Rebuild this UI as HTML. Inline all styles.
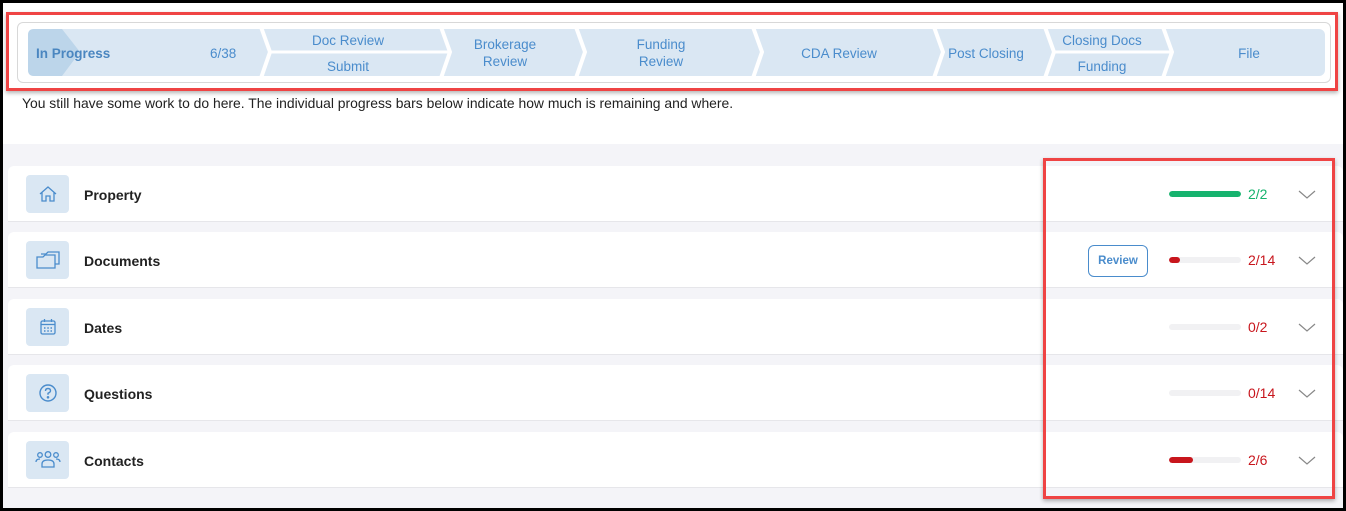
<!DOCTYPE html>
<html><head><style>
*{margin:0;padding:0;box-sizing:border-box}
body{width:1346px;height:511px;background:#000;position:relative;overflow:hidden;font-family:"Liberation Sans",sans-serif}
.page{position:absolute;left:3px;top:3px;width:1340px;height:505px;background:#f4f4f8}
.top{position:absolute;left:0;top:0;width:1340px;height:141px;background:#fff}
.redbox{position:absolute;border:3px solid #ef4444;box-shadow:0 2px 4px rgba(0,0,0,.3)}
.card{position:absolute;left:14px;top:19px;width:1314px;height:61px;border:1px solid #d8d8d8;border-radius:6px;background:#fff}
.intro{position:absolute;left:19px;top:92px;font-size:13.9px;color:#222}
.row{position:absolute;left:5px;width:1335px;height:56px;background:#fff;border-radius:6px 6px 0 0;border-bottom:1px solid #e6e6ea}
.ic{position:absolute;left:18px;top:9px;width:43px;height:38px;background:#dae7f3;border-radius:4px;display:flex;align-items:center;justify-content:center}
.lbl{position:absolute;left:76px;top:21px;font-size:14px;font-weight:bold;color:#222}
.bar{position:absolute;left:1161px;top:25px;width:72px;height:6px;background:#f1f1f3;border-radius:3px;overflow:hidden}
.bar i{display:block;height:6px;border-radius:3px}
.cnt{position:absolute;left:1240px;top:20px;font-size:14px}
.chev{position:absolute;left:1290px;top:24px}
.rev{position:absolute;left:1080px;top:13px;width:60px;height:32px;border:1px solid #4a8ccc;border-radius:6px;color:#4a8ccc;font-size:11.5px;font-weight:bold;display:flex;align-items:center;justify-content:center}
</style></head><body>
<div class="page">
<div class="top"></div>
<div class="card"></div>
<svg style="position:absolute;left:-3px;top:-3px" width="1346" height="100">
<rect x="28" y="29" width="1297" height="47" rx="6" fill="#dae7f3"/>
<path d="M34 29 H62 L80 52 L62 76 H34 Q28 76 28 70 V35 Q28 29 34 29Z" fill="#bcd5ea"/>
<g stroke="#fff" stroke-width="4" fill="none">
<polyline points="261,27 270,52 261,78"/>
<polyline points="441,27 450,52 441,78"/>
<polyline points="576,27 585,52 576,78"/>
<polyline points="753,27 762,52 753,78"/>
<polyline points="934,27 943,52 934,78"/>
<polyline points="1045,27 1054,52 1045,78"/>
<polyline points="1163,27 1172,52 1163,78"/>
<line x1="268" y1="52" x2="450" y2="52" stroke-width="3"/>
<line x1="1052" y1="52" x2="1172" y2="52" stroke-width="3"/>
</g>
<g font-family="Liberation Sans, sans-serif" font-size="13.5" fill="#4a8ccc">
<text x="36" y="58" font-weight="bold" fill="#4a86c0">In Progress</text>
<text x="210" y="58">6/38</text>
<text x="348" y="45" text-anchor="middle">Doc Review</text>
<text x="348" y="71" text-anchor="middle">Submit</text>
<text x="505" y="49" text-anchor="middle">Brokerage</text>
<text x="505" y="66" text-anchor="middle">Review</text>
<text x="661" y="49" text-anchor="middle">Funding</text>
<text x="661" y="66" text-anchor="middle">Review</text>
<text x="839" y="58" text-anchor="middle">CDA Review</text>
<text x="986" y="58" text-anchor="middle">Post Closing</text>
<text x="1102" y="45" text-anchor="middle">Closing Docs</text>
<text x="1102" y="71" text-anchor="middle">Funding</text>
<text x="1249" y="58" text-anchor="middle">File</text>
</g>
</svg>
<div class="intro">You still have some work to do here. The individual progress bars below indicate how much is remaining and where.</div>

<div class="row" style="top:163px"><div class="ic"><svg width="20" height="20" viewBox="0 0 20 20" fill="none" stroke="#4a8ccc" stroke-width="1.3"><path d="M2 10 L10 3 L18 10 M4 8.5 V17 H8 V12 H12 V17 H16 V8.5"/></svg></div><div class="lbl">Property</div><div class="bar"><i style="width:100%;background:#16b36e"></i></div><div class="cnt" style="color:#16b36e">2/2</div><svg class="chev" width="18" height="10"><polyline points="1,1 9,8 17,1" fill="none" stroke="#888" stroke-width="1.2"/></svg></div>

<div class="row" style="top:229px"><div class="ic"><svg width="26" height="22" viewBox="0 0 26 22" fill="none" stroke="#4a8ccc" stroke-width="1.3"><path d="M6 5 H11 L13 3 H24 V15 H20"/><path d="M2 8 H8 L10 6 H20 V19 H2Z"/></svg></div><div class="lbl">Documents</div><div class="rev">Review</div><div class="bar"><i style="width:15%;background:#c8161d"></i></div><div class="cnt" style="color:#c8161d">2/14</div><svg class="chev" width="18" height="10"><polyline points="1,1 9,8 17,1" fill="none" stroke="#888" stroke-width="1.2"/></svg></div>

<div class="row" style="top:296px"><div class="ic"><svg width="18" height="18" viewBox="0 0 18 18" fill="none" stroke="#4a8ccc" stroke-width="1.3"><rect x="2" y="3" width="14" height="13" rx="1.5"/><line x1="2" y1="6.5" x2="16" y2="6.5"/><line x1="5.5" y1="1" x2="5.5" y2="4"/><line x1="12.5" y1="1" x2="12.5" y2="4"/><g stroke-width="1.6"><path d="M5 10h1.5M8.3 10h1.5M11.5 10h1.5M5 13h1.5M8.3 13h1.5M11.5 13h1.5"/></g></svg></div><div class="lbl">Dates</div><div class="bar"></div><div class="cnt" style="color:#c8161d">0/2</div><svg class="chev" width="18" height="10"><polyline points="1,1 9,8 17,1" fill="none" stroke="#888" stroke-width="1.2"/></svg></div>

<div class="row" style="top:362px"><div class="ic"><svg width="20" height="20" viewBox="0 0 20 20" fill="none" stroke="#4a8ccc" stroke-width="1.4"><circle cx="10" cy="10" r="8"/><path d="M7.5 8 Q7.5 5.5 10 5.5 Q12.5 5.5 12.5 7.8 Q12.5 9.3 10 10.3 V11.8"/><circle cx="10" cy="14.3" r=".6" fill="#4a8ccc"/></svg></div><div class="lbl">Questions</div><div class="bar"></div><div class="cnt" style="color:#c8161d">0/14</div><svg class="chev" width="18" height="10"><polyline points="1,1 9,8 17,1" fill="none" stroke="#888" stroke-width="1.2"/></svg></div>

<div class="row" style="top:429px"><div class="ic"><svg width="26" height="20" viewBox="0 0 26 20" fill="none" stroke="#4a8ccc" stroke-width="1.3"><circle cx="5" cy="5" r="2.3"/><circle cx="13" cy="4.5" r="2.8"/><circle cx="21" cy="5" r="2.3"/><path d="M1 12 Q1 9 5 9 M25 12 Q25 9 21 9 M7 17 V14 Q7 10 13 10 Q19 10 19 14 V17 Z"/></svg></div><div class="lbl">Contacts</div><div class="bar"><i style="width:33%;background:#c8161d"></i></div><div class="cnt" style="color:#c8161d">2/6</div><svg class="chev" width="18" height="10"><polyline points="1,1 9,8 17,1" fill="none" stroke="#888" stroke-width="1.2"/></svg></div>
</div>
<div class="redbox" style="left:6px;top:12px;width:1332px;height:79px"></div>
<div class="redbox" style="left:1043px;top:158px;width:292px;height:341px"></div>
</body></html>
